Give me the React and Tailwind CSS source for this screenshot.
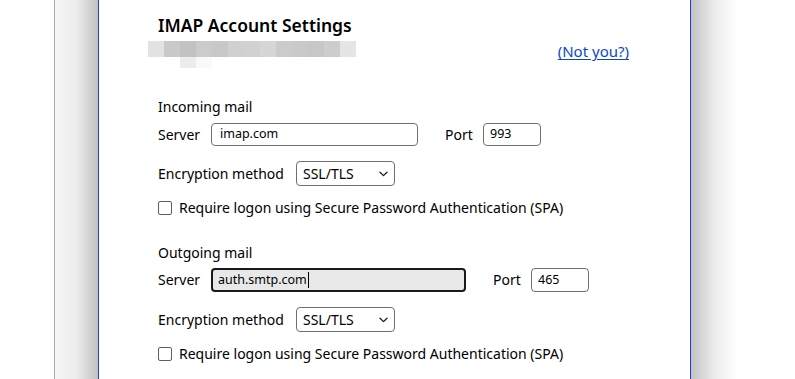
import React from "react";

function Chevron() {
  return (
    <svg width="9" height="6" viewBox="0 0 9 6" className="ml-auto mr-[6px]">
      <path d="M1 1.2 L4.5 4.6 L8 1.2" fill="none" stroke="#1a1a1a" strokeWidth="1.3" strokeLinecap="round" strokeLinejoin="round" />
    </svg>
  );
}

function Select() {
  return (
    <div className="flex h-[25px] w-[99px] items-center rounded-[4px] border border-[#6f6f6f] bg-white pl-[6px] text-[14px] leading-none text-black">
      <span>SSL/TLS</span>
      <Chevron />
    </div>
  );
}

function Checkbox() {
  return (
    <div className="flex h-[20px] items-center">
      <div className="h-[14px] w-[14px] rounded-[2px] border border-[#5f5f5f] bg-white" />
      <span className="ml-[7px] text-[14px] leading-[20px] text-black">
        Require logon using Secure Password Authentication (SPA)
      </span>
    </div>
  );
}

const blocks = [
  "#e2e2e2",
  "#c9c9c9",
  "#c2c2c2",
  "#cbcbcb",
  "#c8c8c8",
  "#d0d0d0",
  "#d1d1d1",
  "#d6d6d6",
  "#cbcbcb",
  "#c9c9c9",
  "#c7c7c7",
  "#cdcdcd",
  "#e5e5e5",
];

export default function App() {
  return (
    <div className="flex h-[379px] w-[795px] overflow-hidden bg-white font-['Noto_Sans',sans-serif] text-black">
      <div className="w-[54px] shrink-0" />
      <div className="w-px shrink-0 bg-[#a9a9a9]" />
      <div className="w-[43px] shrink-0 bg-linear-to-r from-[#f6f6f6] via-[#ececec] to-[#c2c2c2]" />
      <div className="w-px shrink-0 bg-[#1b3fcf]" />
      <div className="flex w-[591px] shrink-0 flex-col pl-[59px] pr-[61px] pt-[13px]">
        <h1 className="text-[17.5px] font-semibold leading-[24px]">IMAP Account Settings</h1>
        <div className="mt-[4px] flex items-start justify-between">
          <div className="ml-[-10px] flex flex-col">
            <div className="flex h-[16px]">
              {blocks.map((c, i) => (
                <div key={i} className="h-[16px] w-[16px]" style={{ backgroundColor: c }} />
              ))}
            </div>
            <div className="flex h-[11px] pl-[32px]">
              <div className="h-[11px] w-[16px] bg-[#ececec]" />
              <div className="h-[11px] w-[16px] bg-[#f9f9f9]" />
            </div>
          </div>
          <a className="mt-[0px] text-[15px] leading-[20px] text-[#0b48c8] underline underline-offset-2">(Not you?)</a>
        </div>

        <div className="mt-[29px] text-[14px] leading-[20px]">Incoming mail</div>
        <div className="mt-[6px] flex h-[23px] items-center">
          <span className="w-[53px] text-[14px] leading-[20px]">Server</span>
          <div className="flex h-[23px] w-[207px] items-center rounded-[4px] border border-[#6f6f6f] pl-[8px] text-[12.5px]">imap.com</div>
          <span className="ml-[27px] w-[38px] text-[14px] leading-[20px]">Port</span>
          <div className="flex h-[23px] w-[58px] items-center rounded-[4px] border border-[#6f6f6f] pl-[6px] text-[12.5px]">993</div>
        </div>
        <div className="mt-[15px] flex h-[25px] items-center">
          <span className="w-[138px] text-[14px] leading-[20px]">Encryption method</span>
          <Select />
        </div>
        <div className="mt-[12px]">
          <Checkbox />
        </div>

        <div className="mt-[25px] text-[14px] leading-[20px]">Outgoing mail</div>
        <div className="mt-[5px] flex h-[24px] items-center">
          <span className="w-[53px] text-[14px] leading-[20px]">Server</span>
          <div className="flex h-[24px] w-[255px] items-center rounded-[4px] border-2 border-[#1a1a1a] bg-[#e8e8e8] pl-[5px] text-[12.5px]">
            <span>auth.smtp.com</span>
            <span className="ml-[1px] h-[16px] w-px bg-black" />
          </div>
          <span className="ml-[27px] w-[38px] text-[14px] leading-[20px]">Port</span>
          <div className="flex h-[24px] w-[58px] items-center rounded-[4px] border border-[#6f6f6f] pl-[6px] text-[12.5px]">465</div>
        </div>
        <div className="mt-[15px] flex h-[25px] items-center">
          <span className="w-[138px] text-[14px] leading-[20px]">Encryption method</span>
          <Select />
        </div>
        <div className="mt-[12px]">
          <Checkbox />
        </div>
      </div>
      <div className="w-px shrink-0 bg-[#1b3fcf]" />
      <div className="w-[46px] shrink-0 bg-linear-to-r from-[#c2c2c2] via-[#ececec] to-white" />
      <div className="flex-1" />
    </div>
  );
}
